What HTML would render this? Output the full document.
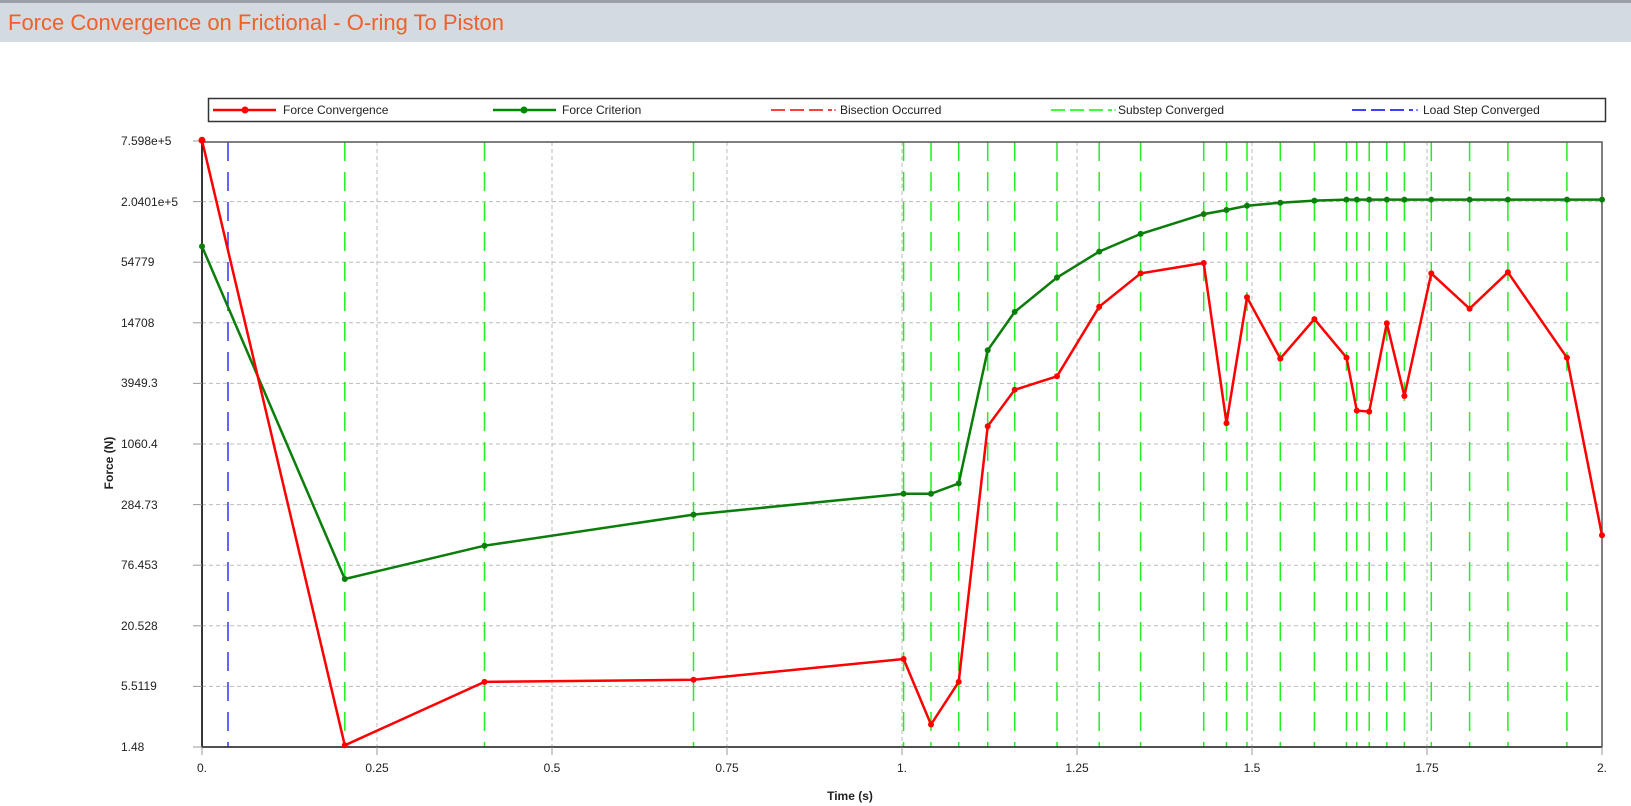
<!DOCTYPE html>
<html><head><meta charset="utf-8"><style>
html,body{margin:0;padding:0;background:#fff;width:1631px;height:806px;overflow:hidden}
.hdr{position:absolute;left:0;top:0;width:1631px;height:42px;background:#d3dae0;border-top:3px solid #9aa0a6;box-sizing:border-box}
.hdr span{position:absolute;left:8px;top:7px;font:22px "Liberation Sans",sans-serif;color:#f0602a}
svg{position:absolute;left:0;top:0}
text{font-family:"Liberation Sans",sans-serif;font-size:12px;fill:#222}
</style></head><body>
<div class="hdr"><span>Force Convergence on Frictional - O-ring To Piston</span></div>
<svg width="1631" height="806">
<!-- legend -->
<rect x="208.5" y="98.5" width="1397" height="23" fill="#fff" stroke="#333" stroke-width="1.5"/>
<line x1="213" y1="110" x2="276" y2="110" stroke="#f00" stroke-width="2.5"/><circle cx="245" cy="110" r="3.5" fill="#f00"/>
<text x="283" y="114">Force Convergence</text>
<line x1="493" y1="110" x2="556" y2="110" stroke="#080" stroke-width="2.5"/><circle cx="524" cy="110" r="3.5" fill="#080"/>
<text x="562" y="114">Force Criterion</text>
<line x1="771" y1="110" x2="832" y2="110" stroke="#f00" stroke-width="1.5" stroke-dasharray="14,5"/><circle cx="835" cy="110" r="0.8" fill="#f00"/>
<text x="840" y="114">Bisection Occurred</text>
<line x1="1051" y1="110" x2="1112" y2="110" stroke="#0f0" stroke-width="1.5" stroke-dasharray="14,5"/><circle cx="1115" cy="110" r="0.8" fill="#0f0"/>
<text x="1118" y="114">Substep Converged</text>
<line x1="1352" y1="110" x2="1413" y2="110" stroke="#00f" stroke-width="1.5" stroke-dasharray="14,5"/><circle cx="1417" cy="110" r="0.8" fill="#00f"/>
<text x="1423" y="114">Load Step Converged</text>

<!-- grid -->
<g stroke="#bbb" stroke-width="1" stroke-dasharray="4,3">
<line x1="202" y1="201.6" x2="1602" y2="201.6"/><line x1="202" y1="262.2" x2="1602" y2="262.2"/>
<line x1="202" y1="322.8" x2="1602" y2="322.8"/><line x1="202" y1="383.4" x2="1602" y2="383.4"/>
<line x1="202" y1="444" x2="1602" y2="444"/><line x1="202" y1="504.6" x2="1602" y2="504.6"/>
<line x1="202" y1="565.2" x2="1602" y2="565.2"/><line x1="202" y1="625.8" x2="1602" y2="625.8"/>
<line x1="202" y1="686.4" x2="1602" y2="686.4"/>
<line x1="377" y1="142" x2="377" y2="747"/><line x1="552" y1="142" x2="552" y2="747"/>
<line x1="727" y1="142" x2="727" y2="747"/><line x1="902" y1="142" x2="902" y2="747"/>
<line x1="1077" y1="142" x2="1077" y2="747"/><line x1="1252" y1="142" x2="1252" y2="747"/>
<line x1="1427" y1="142" x2="1427" y2="747"/>
</g>
<!-- substep lines -->
<g stroke="#22ee22" stroke-width="1.5" stroke-dasharray="19,11">
<line x1="344.8" y1="142" x2="344.8" y2="747"/><line x1="484.5" y1="142" x2="484.5" y2="747"/>
<line x1="693.5" y1="142" x2="693.5" y2="747"/><line x1="903.6" y1="142" x2="903.6" y2="747"/>
<line x1="931" y1="142" x2="931" y2="747"/><line x1="958.7" y1="142" x2="958.7" y2="747"/>
<line x1="987.7" y1="142" x2="987.7" y2="747"/><line x1="1014.7" y1="142" x2="1014.7" y2="747"/>
<line x1="1057" y1="142" x2="1057" y2="747"/><line x1="1099.2" y1="142" x2="1099.2" y2="747"/>
<line x1="1140.6" y1="142" x2="1140.6" y2="747"/><line x1="1203.7" y1="142" x2="1203.7" y2="747"/>
<line x1="1226.5" y1="142" x2="1226.5" y2="747"/><line x1="1247" y1="142" x2="1247" y2="747"/>
<line x1="1280.3" y1="142" x2="1280.3" y2="747"/><line x1="1314.4" y1="142" x2="1314.4" y2="747"/>
<line x1="1346.5" y1="142" x2="1346.5" y2="747"/><line x1="1356.8" y1="142" x2="1356.8" y2="747"/>
<line x1="1369.2" y1="142" x2="1369.2" y2="747"/><line x1="1386.8" y1="142" x2="1386.8" y2="747"/>
<line x1="1404.4" y1="142" x2="1404.4" y2="747"/><line x1="1431.3" y1="142" x2="1431.3" y2="747"/>
<line x1="1469.6" y1="142" x2="1469.6" y2="747"/><line x1="1507.9" y1="142" x2="1507.9" y2="747"/>
<line x1="1566.9" y1="142" x2="1566.9" y2="747"/>
</g>
<line x1="228" y1="142" x2="228" y2="747" stroke="#3333ff" stroke-width="1.5" stroke-dasharray="19,11"/>

<!-- frame -->
<rect x="202" y="142" width="1400" height="605" fill="none" stroke="#555" stroke-width="1.5"/>
<line x1="202" y1="142" x2="202" y2="747" stroke="#111" stroke-width="1.5"/>
<line x1="202" y1="747" x2="1602" y2="747" stroke="#333" stroke-width="1.5"/>
<g stroke="#999" stroke-width="1">
<line x1="193" y1="141" x2="202" y2="141"/><line x1="193" y1="201.6" x2="202" y2="201.6"/><line x1="193" y1="262.2" x2="202" y2="262.2"/>
<line x1="193" y1="322.8" x2="202" y2="322.8"/><line x1="193" y1="383.4" x2="202" y2="383.4"/><line x1="193" y1="444" x2="202" y2="444"/>
<line x1="193" y1="504.6" x2="202" y2="504.6"/><line x1="193" y1="565.2" x2="202" y2="565.2"/><line x1="193" y1="625.8" x2="202" y2="625.8"/>
<line x1="193" y1="686.4" x2="202" y2="686.4"/><line x1="193" y1="747" x2="202" y2="747"/>
<line x1="202" y1="747" x2="202" y2="755"/><line x1="377" y1="747" x2="377" y2="755"/><line x1="552" y1="747" x2="552" y2="755"/>
<line x1="727" y1="747" x2="727" y2="755"/><line x1="902" y1="747" x2="902" y2="755"/><line x1="1077" y1="747" x2="1077" y2="755"/>
<line x1="1252" y1="747" x2="1252" y2="755"/><line x1="1427" y1="747" x2="1427" y2="755"/><line x1="1602" y1="747" x2="1602" y2="755"/>
</g>
<!-- y labels -->
<g>
<text x="121" y="145">7.598e+5</text><text x="121" y="206">2.0401e+5</text><text x="121" y="266">54779</text>
<text x="121" y="327">14708</text><text x="121" y="387">3949.3</text><text x="121" y="448">1060.4</text>
<text x="121" y="509">284.73</text><text x="121" y="569">76.453</text><text x="121" y="630">20.528</text>
<text x="121" y="690">5.5119</text><text x="121" y="751">1.48</text>
</g>
<g text-anchor="middle">
<text x="202" y="772">0.</text><text x="377" y="772">0.25</text><text x="552" y="772">0.5</text>
<text x="727" y="772">0.75</text><text x="902" y="772">1.</text><text x="1077" y="772">1.25</text>
<text x="1252" y="772">1.5</text><text x="1427" y="772">1.75</text><text x="1602" y="772">2.</text>
<text x="850" y="800" font-weight="bold">Time (s)</text>
<text x="0" y="0" font-weight="bold" transform="translate(113,463) rotate(-90)">Force (N)</text>
</g>

<!-- green series -->
<polyline fill="none" stroke="#0a7d0a" stroke-width="2.5" points="202,246.4 344.8,579 484.5,545.7 693.5,514.6 903.6,493.8 931,493.8 958.7,483.4 987.7,350.3 1014.7,311.9 1057,277.5 1099.2,251.6 1140.6,233.9 1203.7,214.1 1226.5,210 1247,205.8 1280.3,202.7 1314.4,200.6 1346.5,199.6 1356.8,199.6 1369.2,199.6 1386.8,199.6 1404.4,199.6 1431.3,199.6 1469.6,199.6 1507.9,199.6 1566.9,199.6 1602,199.6"/>
<g fill="#0a7d0a">
<circle cx="202" cy="246.4" r="3"/><circle cx="344.8" cy="579" r="3"/><circle cx="484.5" cy="545.7" r="3"/><circle cx="693.5" cy="514.6" r="3"/><circle cx="903.6" cy="493.8" r="3"/><circle cx="931" cy="493.8" r="3"/><circle cx="958.7" cy="483.4" r="3"/><circle cx="987.7" cy="350.3" r="3"/><circle cx="1014.7" cy="311.9" r="3"/><circle cx="1057" cy="277.5" r="3"/><circle cx="1099.2" cy="251.6" r="3"/><circle cx="1140.6" cy="233.9" r="3"/><circle cx="1203.7" cy="214.1" r="3"/><circle cx="1226.5" cy="210" r="3"/><circle cx="1247" cy="205.8" r="3"/><circle cx="1280.3" cy="202.7" r="3"/><circle cx="1314.4" cy="200.6" r="3"/><circle cx="1346.5" cy="199.6" r="3"/><circle cx="1356.8" cy="199.6" r="3"/><circle cx="1369.2" cy="199.6" r="3"/><circle cx="1386.8" cy="199.6" r="3"/><circle cx="1404.4" cy="199.6" r="3"/><circle cx="1431.3" cy="199.6" r="3"/><circle cx="1469.6" cy="199.6" r="3"/><circle cx="1507.9" cy="199.6" r="3"/><circle cx="1566.9" cy="199.6" r="3"/><circle cx="1602" cy="199.6" r="3"/>
</g>
<!-- red series -->
<polyline fill="none" stroke="#f00" stroke-width="2.5" points="202,140.3 344.8,745.3 484.5,681.9 693.5,679.8 903.6,659 931,724.5 958.7,681.9 987.7,426.2 1014.7,389.8 1057,376.3 1099.2,306.7 1140.6,273.4 1203.7,263 1226.5,423.1 1247,297.3 1280.3,358.6 1314.4,319.1 1346.5,357.6 1356.8,410.6 1369.2,411.6 1386.8,323.3 1404.4,396 1431.3,273.4 1469.6,308.7 1507.9,272.3 1566.9,357.6 1602,535.3"/>
<g fill="#f00">
<circle cx="202" cy="140.3" r="3.5"/><circle cx="344.8" cy="745.3" r="3"/><circle cx="484.5" cy="681.9" r="3"/><circle cx="693.5" cy="679.8" r="3"/><circle cx="903.6" cy="659" r="3"/><circle cx="931" cy="724.5" r="3"/><circle cx="958.7" cy="681.9" r="3"/><circle cx="987.7" cy="426.2" r="3"/><circle cx="1014.7" cy="389.8" r="3"/><circle cx="1057" cy="376.3" r="3"/><circle cx="1099.2" cy="306.7" r="3"/><circle cx="1140.6" cy="273.4" r="3"/><circle cx="1203.7" cy="263" r="3"/><circle cx="1226.5" cy="423.1" r="3"/><circle cx="1247" cy="297.3" r="3"/><circle cx="1280.3" cy="358.6" r="3"/><circle cx="1314.4" cy="319.1" r="3"/><circle cx="1346.5" cy="357.6" r="3"/><circle cx="1356.8" cy="410.6" r="3"/><circle cx="1369.2" cy="411.6" r="3"/><circle cx="1386.8" cy="323.3" r="3"/><circle cx="1404.4" cy="396" r="3"/><circle cx="1431.3" cy="273.4" r="3"/><circle cx="1469.6" cy="308.7" r="3"/><circle cx="1507.9" cy="272.3" r="3"/><circle cx="1566.9" cy="357.6" r="3"/><circle cx="1602" cy="535.3" r="3"/>
</g>
</svg>
</body></html>
